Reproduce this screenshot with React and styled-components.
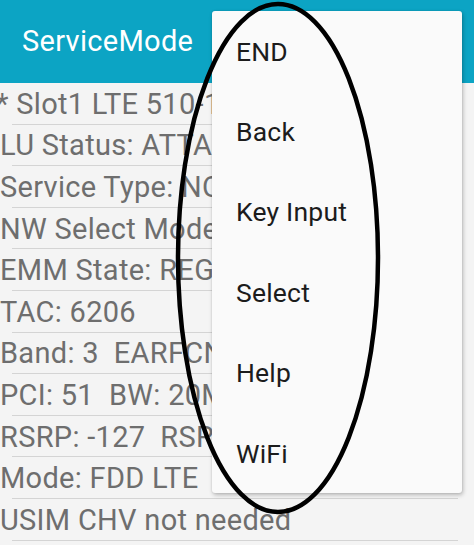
import React from 'react'
import styled, { createGlobalStyle } from 'styled-components'

const Global = createGlobalStyle`
  html, body {
    margin: 0;
    padding: 0;
    background: #f4f4f4;
    font-family: Roboto, "Noto Sans", sans-serif;
  }
`
const Screen = styled.div`
  position: relative;
  width: 474px;
  height: 545px;
  overflow: hidden;
  background: #f4f4f4;
`
const Header = styled.div`
  height: 83px;
  background: #0ca4c4;
  display: flex;
  align-items: center;
  padding-left: 22px;
  padding-bottom: 2px;
  box-sizing: border-box;
`
const Title = styled.div`
  color: #ffffff;
  font-size: 29px;
  letter-spacing: 0.3px;
`
const List = styled.div`
  display: flex;
  flex-direction: column;
`
const Row = styled.div`
  height: 41.6px;
  display: flex;
  align-items: center;
  position: relative;
  box-sizing: border-box;
  &::after {
    content: '';
    position: absolute;
    left: 12px;
    right: 16px;
    bottom: 0;
    height: 1px;
    background: #d4d4d4;
  }
`
// text under the popup menu is clipped at its left edge (x = 212)
const RowText = styled.div`
  width: ${p => (p.$full ? 'auto' : `${212 - (p.$shift || 0)}px`)};
  overflow: hidden;
  margin-left: ${p => p.$shift || 0}px;
  color: #6e6e6e;
  font-size: 29px;
  letter-spacing: 0.3px;
  white-space: pre;
`
const Menu = styled.div`
  position: absolute;
  top: 11px;
  left: 212px;
  width: 250px;
  background: #fafafa;
  border-radius: 3px;
  box-shadow: 1px 2px 4px rgba(0, 0, 0, 0.25), 0 0 2px rgba(0, 0, 0, 0.12);
  display: flex;
  flex-direction: column;
`
const MenuItem = styled.div`
  height: 80.4px;
  display: flex;
  align-items: center;
  padding-left: 24px;
  color: #1c1c1c;
  font-size: 26.5px;
  letter-spacing: 0.2px;
`
const Overlay = styled.svg`
  position: absolute;
  left: 0;
  top: 0;
  pointer-events: none;
`

const rows = [
  '* Slot1 LTE 510-1',
  'LU Status: ATTA',
  'Service Type: NO',
  'NW Select Mode',
  'EMM State: REG',
  'TAC: 6206',
  'Band: 3  EARFCN',
  'PCI: 51  BW: 20M',
  'RSRP: -127  RSR',
  'Mode: FDD LTE',
  'USIM CHV not needed',
  '',
]

const items = ['END', 'Back', 'Key Input', 'Select', 'Help', 'WiFi']

export default function App() {
  return (
    <Screen>
      <Global />
      <Header>
        <Title>ServiceMode</Title>
      </Header>
      <List>
        {rows.map((r, i) => (
          <Row key={i}>
            <RowText $shift={i === 0 ? -4 : 0} $full={i >= 10}>{r}</RowText>
          </Row>
        ))}
      </List>
      <Menu>
        {items.map(item => <MenuItem key={item}>{item}</MenuItem>)}
      </Menu>
      <Overlay width="474" height="545" viewBox="0 0 474 545">
        <ellipse cx="278" cy="258" rx="100" ry="254" fill="none" stroke="#000" strokeWidth="4.5" />
      </Overlay>
    </Screen>
  )
}
